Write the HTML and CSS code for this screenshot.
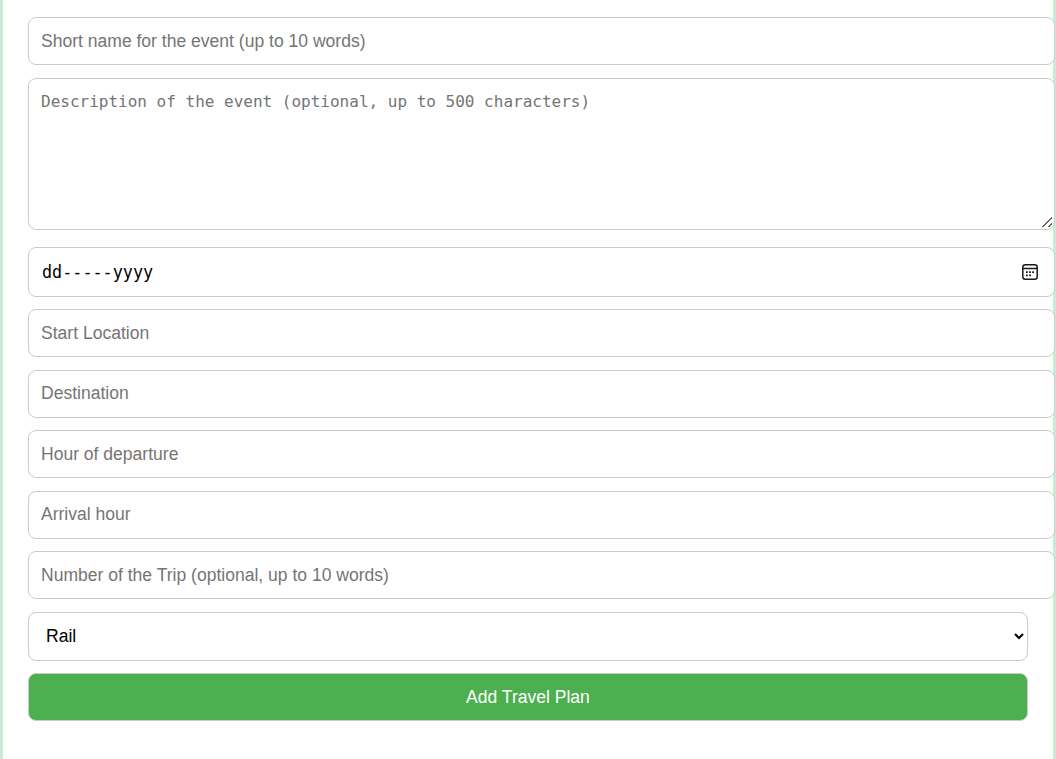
FILE: index.html
```html
<!DOCTYPE html>
<html lang="en">
<head>
    <meta charset="UTF-8">
    <meta name="viewport" content="width=device-width, initial-scale=1.0">
    <title>Add Travel Plan</title>
    <link rel="stylesheet" href="styles.css">
</head>
<body>
    <form class="plan-form">
        <input class="field" type="text" placeholder="Short name for the event (up to 10 words)">
        <textarea class="field field-area" placeholder="Description of the event (optional, up to 500 characters)"></textarea>
        <div class="field field-date">
            <input class="date-text" type="text" value="dd-----yyyy">
            <svg class="date-icon" width="16" height="16" viewBox="0 0 16 16" fill="none">
                <rect x="0.8" y="0.8" width="14.4" height="14.4" rx="2.5" stroke="#1a1a1a" stroke-width="1.5"/>
                <path d="M1 4.5h14" stroke="#1a1a1a" stroke-width="1.5"/>
                <path d="M4 7.2h1.8V9H4zM7.1 7.2h1.8V9H7.1zM10.2 7.2H12V9h-1.8zM4 10.4h1.8v1.8H4zM7.1 10.4h1.8v1.8H7.1z" fill="#1a1a1a"/>
            </svg>
        </div>
        <input class="field" type="text" placeholder="Start Location">
        <input class="field" type="text" placeholder="Destination">
        <input class="field" type="text" placeholder="Hour of departure">
        <input class="field" type="text" placeholder="Arrival hour">
        <input class="field" type="text" placeholder="Number of the Trip (optional, up to 10 words)">
        <select class="field-select">
            <option>Rail</option>
        </select>
        <button class="submit-btn" type="button">Add Travel Plan</button>
    </form>
</body>
</html>
```

FILE: styles.css
```css
* {
    box-sizing: border-box;
}

html, body {
    margin: 0;
    height: 100%;
}

body {
    background-color: #c6ecd6;
    font-family: "Liberation Sans", Arial, sans-serif;
    overflow: hidden;
}

.plan-form {
    width: 1050px;
    height: 100%;
    margin: 0 3px;
    padding: 17px 25px 0;
    background-color: #fff;
}

.field {
    display: block;
    width: 1027px;
    height: 48px;
    padding: 12px;
    margin-bottom: 12.5px;
    border: 1px solid #ccc;
    border-radius: 8px;
    background: #fff;
    font-family: "Liberation Sans", Arial, sans-serif;
    font-size: 17.55px;
}

.field::placeholder {
    color: #757575;
}

.field-area {
    height: 152px;
    margin-bottom: 17px;
    padding-top: 13px;
    font-family: "DejaVu Sans Mono", monospace;
    font-size: 16px;
    resize: vertical;
}

.field-area::-webkit-resizer {
    background: linear-gradient(135deg,
        transparent 61%, #666 61%, #666 69%,
        transparent 69%, transparent 81%, #666 81%, #666 89%,
        transparent 89%) no-repeat 0 0 / 13px 13px;
}

.field-date {
    display: flex;
    align-items: center;
    justify-content: space-between;
    height: 50px;
}

.date-text {
    width: 300px;
    padding: 0 0 0 1px;
    border: 0;
    outline: 0;
    color: #000;
    font-family: "DejaVu Sans Mono", monospace;
    font-size: 16.8px;
}

.date-icon {
    flex-shrink: 0;
    margin-right: 4px;
}

.field-select {
    display: block;
    width: 1000px;
    height: 49px;
    padding: 12px 12px 12px 13px;
    margin-bottom: 12px;
    border: 1px solid #ccc;
    border-radius: 8px;
    background-color: #fff;
    color: #000;
    font-family: "Liberation Sans", Arial, sans-serif;
    font-size: 17.55px;
}

.submit-btn {
    display: block;
    width: 1000px;
    height: 48px;
    padding: 1px 0 0;
    border: 1px solid #ccc;
    border-radius: 8px;
    background-color: #4caf50;
    color: #fff;
    font-family: "Liberation Sans", Arial, sans-serif;
    font-size: 17.55px;
}
```
